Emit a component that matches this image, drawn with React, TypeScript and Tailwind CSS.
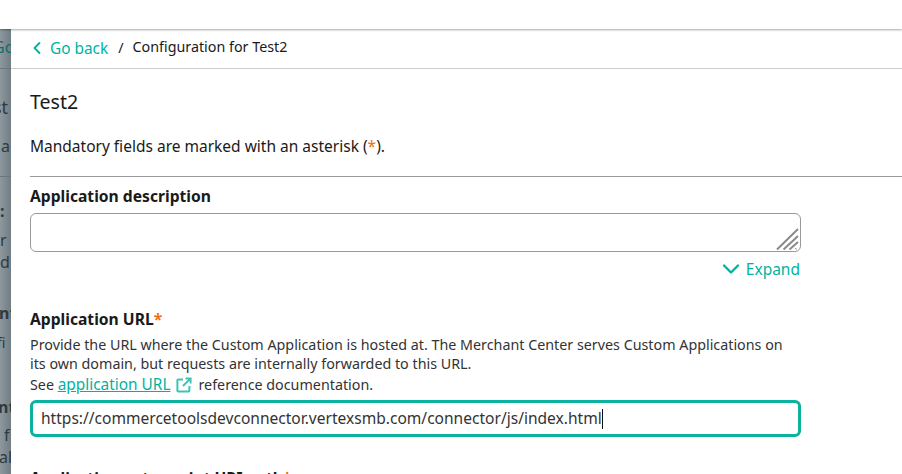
import React from "react";
import { ChevronDown, ChevronLeft } from "lucide-react";

const teal = "text-[#00b39e]";

function ExternalIcon() {
  return (
    <svg width="16" height="16" viewBox="0 0 16 16" fill="none" className="stroke-[#3cc5b5]" strokeWidth="2">
      <path d="M7 2.5H2.2a.8.8 0 0 0-.8.8v10.4c0 .4.4.8.8.8h10.4c.4 0 .8-.4.8-.8V9" />
      <path d="M9.5 1.4h5.1v5.1M14.4 1.6 7 9" />
    </svg>
  );
}

function ResizeHandle() {
  return (
    <svg width="24" height="24" viewBox="0 0 24 24" className="absolute right-[0px] bottom-[0px] stroke-[#8a8a8a]" strokeWidth="2">
      <path d="M1 22.5 22 2M7.5 22.5 22 9M13.5 22.5 22 15M19.5 22l.6-.6" />
    </svg>
  );
}

// the page behind the drawer, only its last few pixels show
function BackdropStrip() {
  return (
    <div className="flex w-[11px] shrink-0 flex-col overflow-hidden bg-gradient-to-r from-[#8d999e] to-[#727d83] text-base leading-[20px] whitespace-nowrap text-[#2f3a40]">
      <div className="mt-[8px] h-[32px] border-b border-[#6b757a] pl-0 text-[#0f6f66]"><span className="-ml-[7px] block">Go</span></div>
      <div className="mt-[24px] h-[20px] text-lg"><span className="-ml-[7px] block">st</span></div>
      <div className="mt-[23px] h-[20px]"><span className="-ml-[9px] block">na</span></div>
      <div className="mt-[20px] h-px bg-[#6b757a]" />
      <div className="mt-[24px] h-[20px] font-bold">:</div>
      <div className="mt-[9px] h-[20px]"><span className="-ml-[9px] block">er</span></div>
      <div className="mt-[2px] h-[20px]">d</div>
      <div className="mt-[31px] h-[20px] font-bold"><span className="-ml-[1px] block">nt</span></div>
      <div className="mt-[10px] h-[20px] text-sm"><span className="-ml-[3px] block">fi</span></div>
      <div className="mt-[44px] h-[20px] font-bold"><span className="-ml-[2px] block">nt</span></div>
      <div className="mt-[8px] h-[20px] pl-[4px]">f</div>
      <div className="mt-[2px] h-[20px]"><span className="-ml-[1px] block">al</span></div>
    </div>
  );
}

export default function App() {
  return (
    <div className="flex h-[474px] w-[902px] flex-col overflow-hidden bg-white font-['Noto_Sans',sans-serif] text-[#1a1a1a]">
      <div className="relative z-10 h-[29px] shrink-0 bg-white shadow-[0_1px_2px_rgba(0,0,0,0.35)]" />
      <div className="flex min-h-0 flex-1">
        <BackdropStrip />
        <div className="min-w-0 flex-1">
          <div className="flex h-10 items-center border-b border-[#cccccc] pb-[2px] pl-[19px]">
            <a className={`flex items-center pt-[2px] text-[15.4px] ${teal}`}>
              <ChevronLeft size={20} strokeWidth={2.2} className="mr-[3px] -ml-[3px]" />
              Go back
            </a>
            <span className="mr-[9px] ml-[10px] text-[14.3px]">/</span>
            <span className="-mt-[1px] text-[14.3px]">Configuration for Test2</span>
          </div>

          <div className="w-[770px] pl-[19px]">
            <h1 className="mt-[20px] text-[19.6px] leading-[26px] font-normal">Test2</h1>
            <p className="mt-[20px] text-[15.5px] leading-[22px]">
              Mandatory fields are marked with an asterisk (<span className="text-[#f16d0e]">*</span>).
            </p>
          </div>
          <div className="mt-[19px] ml-[19px] border-t border-[#999999]" />

          <div className="w-[790px] pl-[19px]">
            <label className="mt-[8px] block text-[15.65px] leading-[22px] font-bold">Application description</label>
            <div className="relative mt-[6px] h-[39px] rounded-md border border-[#999999]">
              <ResizeHandle />
            </div>
            <div className={`mt-[5px] flex items-center justify-end pr-[1px] text-[15.5px] leading-[24px] ${teal}`}>
              <ChevronDown size={28} strokeWidth={2} className="-my-1 mr-[1px]" />
              Expand
            </div>

            <label className="mt-[27px] block text-[15.65px] leading-[22px] font-bold">
              Application URL<span className="text-[#f16d0e]">*</span>
            </label>
            <p className="mt-[5px] text-[14.3px] leading-[19px] text-[#333333]">
              Provide the URL where the Custom Application is hosted at. The Merchant Center serves Custom Applications on
              <br />
              its own domain, but requests are internally forwarded to this URL.
            </p>
            <p className="mt-[1px] flex items-center text-[14.3px] leading-[21px] text-[#333333]">
              See&nbsp;
              <a className={`text-[15.4px] leading-[21px] underline ${teal}`}>application URL</a>
              <span className="mx-[6px] flex"><ExternalIcon /></span>
              reference documentation.
            </p>
            <div className="mt-[5px] flex h-[37px] items-center rounded-md border-[3px] border-[#0bb29f] pl-[8px] text-[15.55px] text-[#333333]">
              https://commercetoolsdevconnector.vertexsmb.com/connector/js/index.html
              <span className="h-[20px] w-px bg-[#111111]" />
            </div>

            <label className="mt-[30px] block text-[15.65px] leading-[22px] font-bold">
              Application entry point URI path<span className="text-[#f16d0e]">*</span>
            </label>
          </div>
        </div>
      </div>
    </div>
  );
}
